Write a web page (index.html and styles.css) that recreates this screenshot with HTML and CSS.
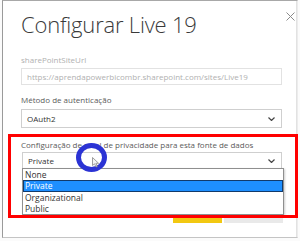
FILE: index.html
```html
<!DOCTYPE html>
<html lang="pt">
<head>
<meta charset="utf-8">
<link rel="stylesheet" href="styles.css">
</head>
<body>
<div class="dialog">
  <div class="header">
    <h1 class="title">Configurar Live 19</h1>
    <svg class="close" width="9" height="9" viewBox="0 0 9 9"><path d="M0.5 0.5L8.5 8.5M8.5 0.5L0.5 8.5" stroke="#8a8a8a" stroke-width="1" fill="none"/></svg>
  </div>
  <div class="label label-disabled">sharePointSiteUrl</div>
  <div class="field field-disabled">https://aprendapowerbicombr.sharepoint.com/sites/Live19</div>
  <div class="label label-gap">Método de autenticação</div>
  <div class="field field-select">
    <span>OAuth2</span>
    <svg class="chev" width="7" height="4" viewBox="0 0 7 4"><path d="M0.5 0.5L3.5 3.5L6.5 0.5" stroke="#444" stroke-width="1.2" fill="none"/></svg>
  </div>
  <div class="label label-gap2">Configuração de nível de privacidade para esta fonte de dados</div>
  <div class="field field-select field-open">
    <span>Private</span>
    <svg class="chev" width="7" height="4" viewBox="0 0 7 4"><path d="M0.5 0.5L3.5 3.5L6.5 0.5" stroke="#444" stroke-width="1.2" fill="none"/></svg>
  </div>
  <div class="buttons">
    <div class="btn btn-primary"></div>
    <div class="btn btn-secondary"></div>
  </div>

  <ul class="options">
    <li>None</li>
    <li class="selected">Private</li>
    <li>Organizational</li>
    <li>Public</li>
  </ul>
  <div class="highlight"></div>
  <div class="cursor-ring"></div>
  <svg class="pointer" width="8" height="11" viewBox="0 0 8 11"><path d="M0.5 0.5L0.5 8.5L2.5 6.8L4 10L5.3 9.4L3.9 6.3L6.6 6.3Z" fill="#f4f4f4" stroke="#888" stroke-width="0.8"/></svg>
</div>
</body>
</html>
```
FILE: styles.css
```css
* { box-sizing: border-box; }
html, body { margin: 0; padding: 0; background: #fbfbfb; }
body {
  width: 300px;
  height: 241px;
  overflow: hidden;
  font-family: "Open Sans", "DejaVu Sans", sans-serif;
}
.dialog {
  position: relative;
  margin-left: 2px;
  width: 296px;
  height: 238px;
  background: #fff;
  border-left: 1px solid #9a9a9a;
  border-top: 1px solid #a8a8a8;
  border-bottom: 1px solid #c4c4c4;
  border-right: 1px solid #ececec;
  box-shadow: -1px 0 0 #e2e2e2 inset;
  padding: 0 15px 0 18px;
}
.header {
  height: 53px;
  display: flex;
  justify-content: space-between;
  align-items: flex-start;
  margin-right: -13px;
}
.title {
  margin: 10px 0 0 0;
  font-size: 22px;
  line-height: 26px;
  font-weight: 300;
  color: #3a3a3a;
  letter-spacing: -0.2px;
}
.close { margin-top: 11px; }
.label {
  font-size: 8px;
  line-height: 12px;
  color: #5a5a5a;
  white-space: nowrap;
}
.label-disabled { color: #b0b0b0; }
.label-gap { margin-top: 9px; }
.label-gap2 { margin-top: 11px; }
.field {
  margin-top: 2px;
  height: 17px;
  border: 1px solid #d6d6d6;
  font-size: 8px;
  line-height: 15px;
  padding: 0 6px 0 5px;
  color: #333;
  white-space: nowrap;
  display: flex;
  align-items: center;
  justify-content: space-between;
}
.field-disabled { color: #b0b0b0; border-color: #e2e2e2; }
.field-select { margin-top: 3px; height: 19px; border-color: #cfcfcf; }
.field-open { margin-top: 1px; height: 17px; margin-left: 1px; }
.chev { flex: none; }
.buttons {
  margin-top: 33px;
  display: flex;
  justify-content: flex-end;
  gap: 2px;
}
.btn { height: 21px; }
.btn-primary { width: 49px; background: #f2c811; }
.btn-secondary { width: 59px; background: #e9e9e9; margin-right: -1px; }
.options {
  position: absolute;
  left: 19px;
  top: 167px;
  width: 262px;
  margin: 0;
  padding: 0;
  list-style: none;
  background: #fff;
  border: 1px solid #8f8f8f;
  box-shadow: 1px 1px 2px rgba(0,0,0,0.2);
  font-size: 8.5px;
  color: #333;
}
.options li {
  height: 11.3px;
  line-height: 11px;
  padding-left: 2px;
}
.options li.selected {
  background: #1e8fff;
  color: #fff;
  outline: 1px solid #123a6a;
  outline-offset: -1px;
}
.highlight {
  position: absolute;
  left: 5px;
  top: 133px;
  width: 290px;
  height: 84px;
  border: 3px solid #f00;
}
.cursor-ring {
  position: absolute;
  left: 73px;
  top: 142px;
  width: 31px;
  height: 29px;
  border-radius: 50%;
  border: 5px solid #2b33d4;
}
.pointer {
  position: absolute;
  left: 89px;
  top: 156px;
}
```
